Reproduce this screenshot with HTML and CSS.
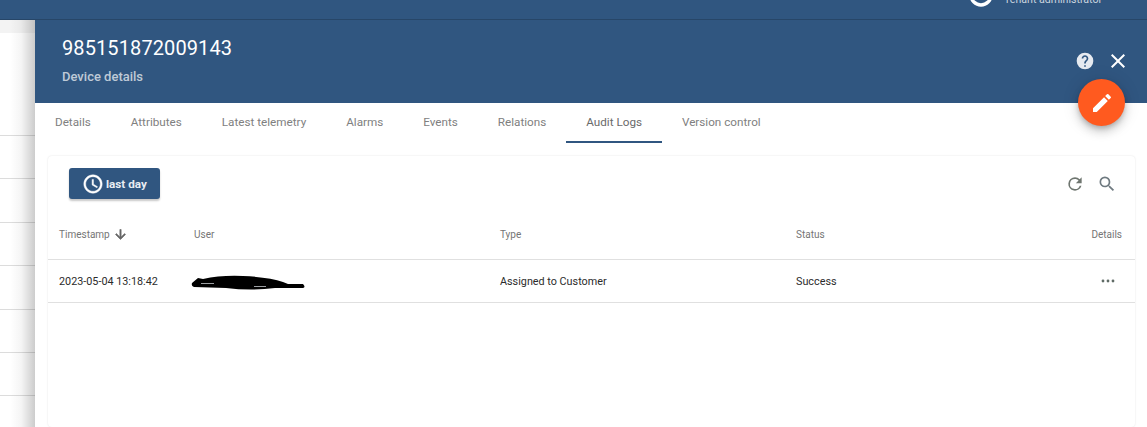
FILE: index.html
```html
<!DOCTYPE html>
<html lang="en">
<head>
<meta charset="utf-8">
<title>Device details</title>
<link rel="stylesheet" href="styles.css">
</head>
<body>
<header class="topbar">
  <svg class="avatar" width="24" height="24" viewBox="0 0 24 24"><circle cx="12" cy="12" r="10" fill="none" stroke="#fff" stroke-width="3.4"/></svg>
  <span class="role">Tenant administrator</span>
</header>
<div class="main">
  <aside class="backdrop">
    <div class="bd-head"></div>
    <div class="bd-row bd-first"></div>
    <div class="bd-row"></div>
    <div class="bd-row"></div>
    <div class="bd-row"></div>
    <div class="bd-row"></div>
    <div class="bd-row"></div>
    <div class="bd-row"></div>
  </aside>
  <section class="panel">
    <div class="panel-head">
      <div>
        <h1 class="title">985151872009143</h1>
        <div class="subtitle">Device details</div>
      </div>
      <div class="head-actions">
        <svg width="20" height="20" viewBox="0 0 24 24"><path fill="#e6eaf0" d="M12 2a10 10 0 1 0 0 20 10 10 0 0 0 0-20z"/><path fill="#305680" d="M13 19h-2v-2h2zm2.07-7.75-.9.92C13.45 12.9 13 13.5 13 15h-2v-.5c0-1.1.45-2.1 1.17-2.83l1.24-1.26c.37-.36.59-.86.59-1.41 0-1.1-.9-2-2-2s-2 .9-2 2H8c0-2.21 1.79-4 4-4s4 1.79 4 4c0 .88-.36 1.68-.93 2.25z"/></svg>
        <svg width="24" height="24" viewBox="0 0 24 24"><path fill="#fff" d="M19 6.41 17.59 5 12 10.59 6.41 5 5 6.41 10.59 12 5 17.59 6.41 19 12 13.41 17.59 19 19 17.59 13.41 12z"/></svg>
      </div>
    </div>
    <button class="fab" type="button" aria-label="Edit">
      <svg width="24" height="24" viewBox="0 0 24 24"><path fill="#fff" d="M3 17.25V21h3.75L17.81 9.94l-3.75-3.75L3 17.25zM20.71 7.04a1 1 0 0 0 0-1.41l-2.34-2.34a1 1 0 0 0-1.41 0l-1.83 1.83 3.75 3.75 1.83-1.83z"/></svg>
    </button>
    <nav class="tabs">
      <span class="tab">Details</span>
      <span class="tab">Attributes</span>
      <span class="tab">Latest telemetry</span>
      <span class="tab">Alarms</span>
      <span class="tab">Events</span>
      <span class="tab">Relations</span>
      <span class="tab tab-active">Audit Logs</span>
      <span class="tab">Version control</span>
    </nav>
    <div class="content">
      <div class="card">
        <div class="toolbar">
          <button class="range" type="button">
            <svg width="22" height="22" viewBox="0 0 24 24"><path fill="#fff" stroke="#fff" stroke-width=".5" d="M11.99 2C6.47 2 2 6.48 2 12s4.47 10 9.99 10C17.52 22 22 17.52 22 12S17.52 2 11.99 2zM12 20c-4.42 0-8-3.58-8-8s3.58-8 8-8 8 3.58 8 8-3.58 8-8 8zm.5-13H11v6l5.25 3.15.75-1.23-4.5-2.67z"/></svg>
            <span>last day</span>
          </button>
          <div class="tools">
            <svg width="20" height="20" viewBox="0 0 24 24"><path fill="#6f7670" d="M17.65 6.35A7.96 7.96 0 0 0 12 4a8 8 0 1 0 7.73 10h-2.08A6 6 0 1 1 12 6c1.66 0 3.14.69 4.22 1.78L13 11h7V4l-2.35 2.35z"/></svg>
            <svg width="20" height="20" viewBox="0 0 24 24"><path fill="#6f7a80" d="M15.5 14h-.79l-.28-.27A6.47 6.47 0 0 0 16 9.5 6.5 6.5 0 1 0 9.5 16c1.61 0 3.09-.59 4.23-1.57l.27.28v.79l5 4.99L20.49 19l-4.99-5zm-6 0C7.01 14 5 11.99 5 9.5S7.01 5 9.5 5 14 7.01 14 9.5 11.99 14 9.5 14z"/></svg>
          </div>
        </div>
        <div class="row row-head">
          <div class="c-time sortable">Timestamp
            <svg width="15" height="15" viewBox="0 0 24 24"><path fill="#666" stroke="#666" stroke-width="1" d="M20 12l-1.41-1.41L13 16.17V4h-2v12.17l-5.58-5.59L4 12l8 8z"/></svg>
          </div>
          <div class="c-user">User</div>
          <div class="c-type">Type</div>
          <div class="c-status">Status</div>
          <div class="c-details">Details</div>
        </div>
        <div class="row row-body">
          <div class="c-time">2023-05-04 13:18:42</div>
          <div class="c-user">
            <svg class="redact" width="114" height="20" viewBox="0 0 114 20"><path fill="#000" d="M1 12 L7 7 L12 8 Q30 4 52 5 Q78 6 92 11 L97 13 L112 13 Q115 16 112 17 L84 17 Q60 20 35 17 L3 16 Q0 15 1 12z"/><path fill="#cfd4d8" d="M10 12h13v.7H10zM63 15h12v.7H63z"/></svg>
          </div>
          <div class="c-type">Assigned to Customer</div>
          <div class="c-status">Success</div>
          <div class="c-details">
            <svg class="dots" width="14" height="4" viewBox="0 0 14 4"><circle cx="2" cy="2" r="1.4"/><circle cx="7" cy="2" r="1.4"/><circle cx="12" cy="2" r="1.4"/></svg>
          </div>
        </div>
      </div>
    </div>
  </section>
</div>
</body>
</html>
```
FILE: styles.css
```css
* { box-sizing: border-box; }
html, body { margin: 0; height: 100%; overflow: hidden; }
body {
  font-family: Roboto, "Liberation Sans", sans-serif;
  background: #fff;
  display: flex;
  flex-direction: column;
}
.topbar {
  height: 20px;
  flex: none;
  background: #305680;
  border-bottom: 1px solid #274668;
  position: relative;
  overflow: hidden;
}
.avatar { position: absolute; left: 969px; top: -17px; }
.role {
  position: absolute;
  left: 1004px;
  top: -7px;
  font-size: 10.6px;
  line-height: 14px;
  color: rgba(255, 255, 255, .75);
}
.main { flex: 1; display: flex; min-height: 0; }
.backdrop {
  width: 35px;
  flex: none;
  position: relative;
  overflow: hidden;
  background: #fff;
}
.backdrop::after {
  content: "";
  position: absolute;
  inset: 0;
  background: linear-gradient(to right, rgba(0,0,0,0) 30%, rgba(0,0,0,.04) 60%, rgba(0,0,0,.2) 100%);
}
.bd-head { height: 13px; background: #f3f3f3; }
.bd-row { height: 43.4px; border-bottom: 1px solid #dcdcdc; }
.bd-first { height: 103px; }
.panel {
  flex: 1;
  min-width: 0;
  display: flex;
  flex-direction: column;
  position: relative;
}
.panel-head {
  height: 83px;
  flex: none;
  background: #305680;
  padding: 16px 0 0 27px;
  display: flex;
  justify-content: space-between;
}
.title {
  margin: 0;
  font-size: 20px;
  line-height: 24px;
  font-weight: 400;
  letter-spacing: .1px;
  color: #fff;
}
.subtitle {
  margin-top: 9px;
  font-size: 13px;
  line-height: 16px;
  font-weight: 500;
  color: rgba(255, 255, 255, .7);
}
.head-actions {
  display: flex;
  align-items: center;
  gap: 11px;
  height: 24px;
  margin: 13px 17px 0 0;
}
.fab {
  position: absolute;
  left: 1043px;
  top: 59px;
  width: 47px;
  height: 47px;
  padding: 0;
  border: 0;
  border-radius: 50%;
  background: #ff5a1f;
  display: flex;
  align-items: center;
  justify-content: center;
  box-shadow: 0 3px 5px -1px rgba(0,0,0,.2), 0 6px 10px rgba(0,0,0,.14), 0 1px 18px rgba(0,0,0,.12);
}
.tabs {
  height: 40px;
  flex: none;
  display: flex;
}
.tab {
  padding: 0 20px;
  font-size: 11.7px;
  line-height: 39px;
  height: 40px;
  color: #808080;
  white-space: nowrap;
}
.tab-active {
  color: #6a6a6a;
  border-bottom: 2px solid #305680;
}
.content { flex: 1; min-height: 0; padding: 13px 12px 0 13px; display: flex; }
.card {
  flex: 1;
  min-width: 0;
  background: #fff;
  border-radius: 4px;
  box-shadow: 0 0 2px rgba(0,0,0,.12);
}
.toolbar {
  height: 58px;
  padding: 12px 18px 0 21px;
  display: flex;
  justify-content: space-between;
  align-items: flex-start;
}
.range {
  width: 91px;
  height: 31px;
  padding: 0 0 0 13px;
  border: 0;
  border-radius: 3px;
  background: #305680;
  color: #e8edf3;
  font-family: inherit;
  font-size: 11.7px;
  font-weight: 700;
  display: flex;
  align-items: center;
  gap: 2px;
  box-shadow: 0 2px 2px rgba(0,0,0,.22);
}
.tools { display: flex; gap: 12px; padding-top: 6px; }
.row {
  display: flex;
  align-items: center;
  border-bottom: 1px solid #e0e0e0;
  padding: 0 13px 0 11px;
}
.row-head { height: 46px; padding-bottom: 4px; font-size: 10px; color: #757575; }
.row-body { height: 43px; font-size: 10.8px; color: #2b2b2b; }
.c-time { width: 135px; display: flex; align-items: center; gap: 3px; }
.c-user { width: 306px; display: flex; }
.c-type { width: 296px; }
.c-status { width: 200px; }
.c-details { flex: 1; display: flex; justify-content: flex-end; }
.redact { margin-left: -3px; }
.dots { fill: #5f6b66; margin-right: 7px; }
```
